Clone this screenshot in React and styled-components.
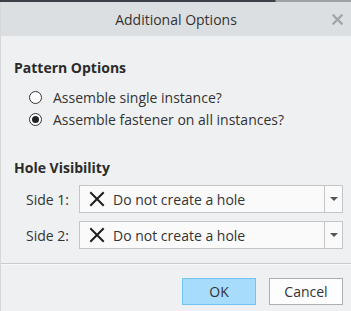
import React from "react";
import styled, { createGlobalStyle } from "styled-components";

const GlobalStyle = createGlobalStyle`
  html, body {
    margin: 0;
    padding: 0;
    background: #eef0f1;
    font-family: "Open Sans", "Noto Sans", sans-serif;
    color: #333;
  }
`;

const Backdrop = styled.div`
  height: 2px;
  background: linear-gradient(to right, #3b4046 0, #3b4046 275px, #9ea2a6 276px, #9ea2a6 100%);
`;

const Dialog = styled.div`
  width: 351px;
  height: 309px;
  box-sizing: border-box;
  border-left: 1px solid #d6d8da;
  background: #eef0f1;
  display: flex;
  flex-direction: column;
`;

const TitleBar = styled.div`
  height: 34px;
  background: #dcdfe1;
  display: grid;
  grid-template-columns: 1fr auto 1fr;
  align-items: center;
  font-size: 14px;
  color: #333;
`;

const CloseButton = styled.div`
  justify-self: end;
  display: flex;
  align-items: center;
  padding-right: 8px;
`;

const Content = styled.div`
  padding: 22px 8px 0 13px;
  display: flex;
  flex-direction: column;
`;

const Heading = styled.div`
  font-size: 14px;
  font-weight: 700;
  line-height: 19px;
  color: #2b2b2b;
  margin-top: ${(p) => p.$top || 0}px;
`;

const RadioList = styled.div`
  margin-top: 9px;
  padding-left: 15px;
  display: flex;
  flex-direction: column;
`;

const RadioRow = styled.label`
  height: 22px;
  display: flex;
  align-items: center;
  gap: 11px;
  font-size: 14px;
`;

const RadioCircle = styled.span`
  width: 13px;
  height: 13px;
  box-sizing: border-box;
  border-radius: 50%;
  border: 1px solid #333;
  background: #fff;
  display: flex;
  align-items: center;
  justify-content: center;
  &::after {
    content: "";
    width: 7px;
    height: 7px;
    border-radius: 50%;
    background: ${(p) => (p.$checked ? "#222" : "transparent")};
  }
`;

const SelectList = styled.div`
  margin-top: 8px;
  display: flex;
  flex-direction: column;
  gap: 8px;
`;

const SelectRow = styled.div`
  display: flex;
  align-items: center;
  gap: 10px;
`;

const SideLabel = styled.span`
  width: 55px;
  text-align: right;
  font-size: 14px;
`;

const SelectBox = styled.div`
  flex: 1;
  height: 28px;
  box-sizing: border-box;
  border: 1px solid #c3c5c7;
  background: #fafafa;
  display: flex;
  align-items: stretch;
`;

const SelectValue = styled.div`
  flex: 1;
  display: flex;
  align-items: center;
  gap: 8px;
  padding-left: 9px;
  font-size: 14px;
`;

const SelectArrow = styled.div`
  width: 17px;
  border-left: 1px solid #c3c5c7;
  display: flex;
  align-items: center;
  justify-content: center;
  &::after {
    content: "";
    border-left: 4px solid transparent;
    border-right: 4px solid transparent;
    border-top: 4px solid #555;
  }
`;

const Separator = styled.div`
  margin-top: 14px;
  height: 1px;
  background: #c9cbcd;
  border-bottom: 1px solid #f7f8f9;
`;

const Footer = styled.div`
  padding: 13px 8px 0 0;
  display: flex;
  justify-content: flex-end;
  gap: 13px;
`;

const Button = styled.button`
  width: 74px;
  height: 27px;
  box-sizing: border-box;
  font-family: inherit;
  font-size: 14px;
  color: #333;
  border: 1px solid ${(p) => (p.$primary ? "#72c4f2" : "#adafb1")};
  background: ${(p) => (p.$primary ? "#a7dcfd" : "#fdfdfd")};
  padding: 0;
`;

function CrossIcon({ size = 16, color = "#222", width = 2 }) {
  return (
    <svg width={size} height={size} viewBox="0 0 16 16">
      <path d="M2 2 L14 14 M14 2 L2 14" stroke={color} strokeWidth={width} strokeLinecap="square" fill="none" />
    </svg>
  );
}

const sides = ["Side 1:", "Side 2:"];

export default function App() {
  return (
    <>
      <GlobalStyle />
      <Backdrop />
      <Dialog>
        <TitleBar>
          <span />
          <span>Additional Options</span>
          <CloseButton>
            <CrossIcon size={11} color="#a2a4a6" width={3.2} />
          </CloseButton>
        </TitleBar>
        <Content>
          <Heading>Pattern Options</Heading>
          <RadioList>
            <RadioRow>
              <RadioCircle />
              Assemble single instance?
            </RadioRow>
            <RadioRow>
              <RadioCircle $checked />
              Assemble fastener on all instances?
            </RadioRow>
          </RadioList>
          <Heading $top={28}>Hole Visibility</Heading>
          <SelectList>
            {sides.map((s) => (
              <SelectRow key={s}>
                <SideLabel>{s}</SideLabel>
                <SelectBox>
                  <SelectValue>
                    <CrossIcon size={16} color="#1e1e1e" width={2} />
                    Do not create a hole
                  </SelectValue>
                  <SelectArrow />
                </SelectBox>
              </SelectRow>
            ))}
          </SelectList>
        </Content>
        <Separator />
        <Footer>
          <Button $primary>OK</Button>
          <Button>Cancel</Button>
        </Footer>
      </Dialog>
    </>
  );
}
